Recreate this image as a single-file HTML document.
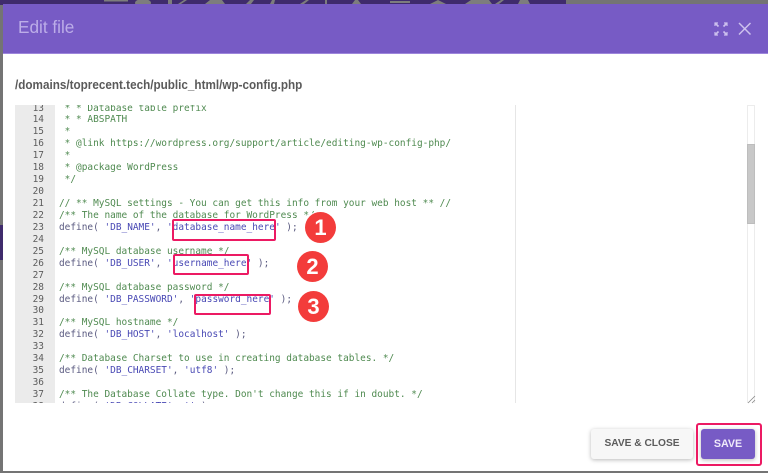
<!DOCTYPE html>
<html><head><meta charset="utf-8"><style>
*{box-sizing:border-box}
html,body{margin:0;padding:0;width:768px;height:473px;overflow:hidden;background:#747474;font-family:"Liberation Sans",sans-serif}
.a{position:absolute}
#modal{left:3px;top:4px;width:765px;height:467px;background:#fff}
#head{left:3px;top:4px;width:765px;height:50px;background:#775bc5;border-bottom:1px solid #9d86dc}
#title{left:18px;top:17px;font-size:17.2px;line-height:21px;color:#bcade8;filter:blur(.3px)}
#path{left:15px;top:77px;font-size:13px;line-height:16px;font-weight:bold;color:#5a5a5a;white-space:nowrap;transform:scaleX(.9);transform-origin:0 0;filter:blur(.3px)}
#gut{left:15px;top:105px;width:40px;height:298px;background:#ebebeb;overflow:hidden}
#nums{position:absolute;left:0;top:-2.500px;width:29px;text-align:right;filter:blur(.3px)}
#code{left:59px;top:105px;width:450px;height:298px;overflow:hidden}
#lines{position:absolute;left:0;top:-2.500px;white-space:pre}
pre,#nums,#lines{margin:0;font-family:"DejaVu Sans Mono",monospace;font-size:9.45px;line-height:11.93px}
#nums{color:#5c5c5c}
#lines{color:#4f8a50;filter:blur(.3px)}
.d{color:#5a5a80}.s{color:#4848b4}
.box{position:absolute;border:2px solid #ec1a63;border-radius:2px}
.num{position:absolute;width:31px;height:31px;border-radius:50%;background:#f33c3b;color:#fff;font-weight:bold;font-size:22px;line-height:31px;text-align:center;box-shadow:0 0 0 1px #fff}
.btn{position:absolute;top:429px;height:30px;border-radius:3px;font-weight:bold;line-height:30px;text-align:center;box-shadow:0 1px 4px rgba(0,0,0,.28)}
.btn span{filter:blur(.25px);display:inline-block}
</style></head><body>
<svg class="a" style="left:0;top:0" width="768" height="473" viewBox="0 0 768 473">
<rect x="0" y="0" width="566" height="5" fill="#3f2b6c"/>
<rect x="0" y="225" width="3" height="35" fill="#3f2b6c"/>
<g fill="#7d7d7d"><rect x="104" y="0" width="24" height="1.5"/><ellipse cx="143" cy="3" rx="8" ry="4"/><rect x="168" y="0" width="4" height="4"/><path d="M178 4l6-4h3l-6 4zM205 4l5-4h12l3 4zM246 4l4-4h4l-3 4zM270 4l2-4h3l-1 4zM300 4l6-4h3l-5 4zM325 0h2v4h-2zM352 4l3-4h3l3 4zM390 1h20v2h-20zM430 4l8-4 8 4zM465 4l6-4h18l3 4zM495 4l6-4h3l-5 4zM520 0h8l2 4h-12z"/></g>
</svg>
<div class="a" id="modal"></div>
<div class="a" id="head"></div>
<div class="a" id="title">Edit file</div>
<svg class="a" style="left:714px;top:22px" width="40" height="14" viewBox="0 0 40 14" fill="none" stroke="#cdc1ee" stroke-width="1.3">
<path d="M1 1l3.500 3.500M1 13l3.500-3.500M13 1L9.500 4.500M13 13L9.500 9.500" stroke-width="1.6"/>
<path d="M1 4V1h3M1 10v3h3M10 1h3v3M10 13h3v-3" stroke-width="1.2"/>
<path d="M25 1L36.500 12.500M36.500 1L25 12.500" stroke-width="1.5"/>
</svg>
<div class="a" id="path">/domains/toprecent.tech/public_html/wp-config.php</div>
<div class="a" style="left:515px;top:105px;width:1px;height:298px;background:#e6e6e6"></div>
<div class="a" id="gut"><div id="nums">13<br>14<br>15<br>16<br>17<br>18<br>19<br>20<br>21<br>22<br>23<br>24<br>25<br>26<br>27<br>28<br>29<br>30<br>31<br>32<br>33<br>34<br>35<br>36<br>37<br>38</div></div>
<div class="a" id="code"><pre id="lines"> * * Database table prefix
 * * ABSPATH
 *
 * @link https://wordpress.org/support/article/editing-wp-config-php/
 *
 * @package WordPress
 */

// ** MySQL settings - You can get this info from your web host ** //
/** The name of the database for WordPress */
<span class="d">define( <span class="s">'DB_NAME'</span>, <span class="s">'database_name_here'</span> );</span>

/** MySQL database username */
<span class="d">define( <span class="s">'DB_USER'</span>, <span class="s">'username_here'</span> );</span>

/** MySQL database password */
<span class="d">define( <span class="s">'DB_PASSWORD'</span>, <span class="s">'password_here'</span> );</span>

/** MySQL hostname */
<span class="d">define( <span class="s">'DB_HOST'</span>, <span class="s">'localhost'</span> );</span>

/** Database Charset to use in creating database tables. */
<span class="d">define( <span class="s">'DB_CHARSET'</span>, <span class="s">'utf8'</span> );</span>

/** The Database Collate type. Don't change this if in doubt. */
<span class="d">define( <span class="s">'DB_COLLATE'</span>, <span class="s">''</span> );</span></pre></div>
<div class="a" style="left:747px;top:105px;width:8px;height:298px;border:1px solid #ececec;border-bottom:0"></div>
<div class="a" style="left:747px;top:144px;width:8px;height:80px;background:#c8c8c8;border:1px solid #bdbdbd"></div>
<svg class="a" style="left:747px;top:395px" width="9" height="9" viewBox="0 0 9 9" stroke="#8a8a8a" stroke-width=".8"><path d="M1 8l7-7M5 8l3-3"/></svg>
<div class="box" style="left:172px;top:219px;width:104px;height:22px"></div>
<div class="box" style="left:173px;top:254px;width:76px;height:21px"></div>
<div class="box" style="left:194px;top:294px;width:77px;height:21px"></div>
<div class="num" style="left:305px;top:212px">1</div>
<div class="num" style="left:297px;top:251px">2</div>
<div class="num" style="left:298px;top:291px">3</div>
<div class="btn" style="left:591px;width:102px;background:#f7f7f7;color:#5c5c5c;font-size:10.2px"><span>SAVE &amp; CLOSE</span></div>
<div class="btn" style="left:701px;width:54px;background:#775bc5;color:#efeafa;font-size:10.7px"><span>SAVE</span></div>
<div class="a" style="left:696px;top:423px;width:66px;height:43px;border:2px solid #ec1a63;border-radius:3px"></div>
</body></html>
